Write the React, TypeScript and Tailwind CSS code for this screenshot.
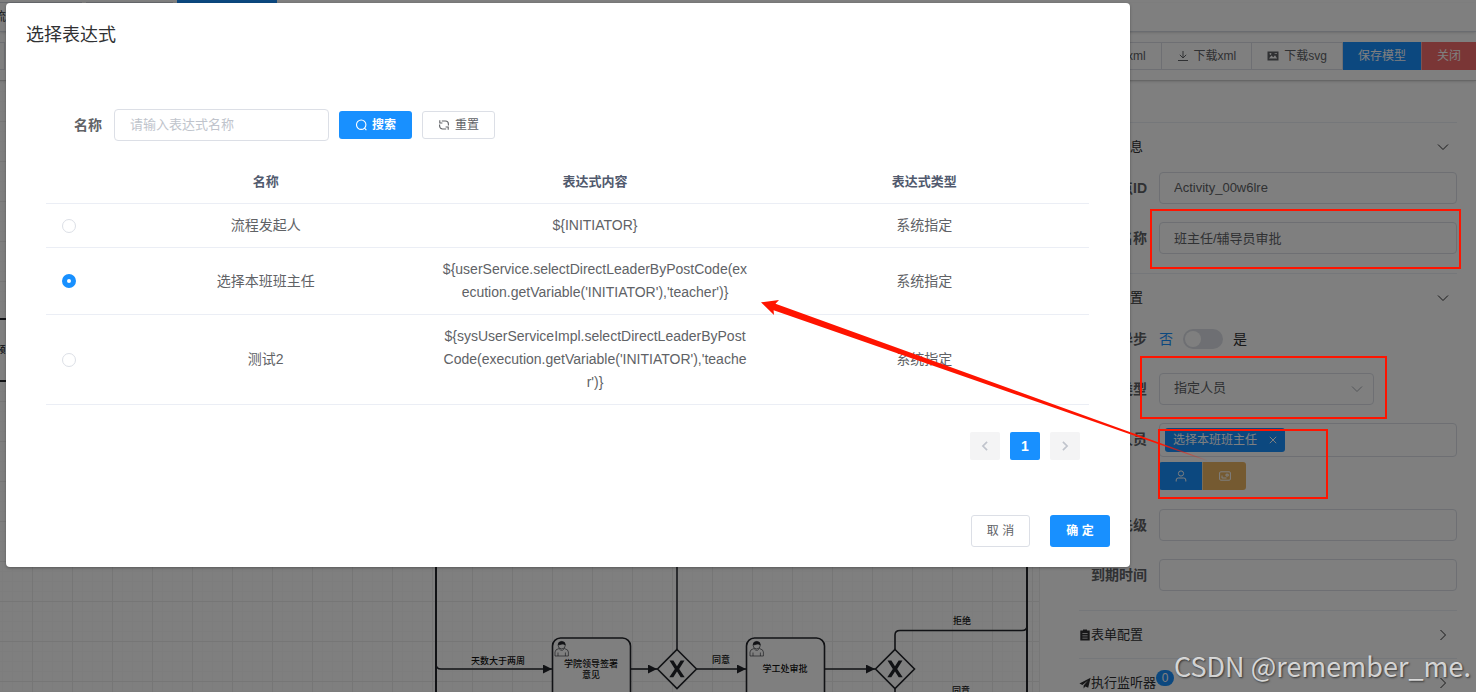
import React from "react";

const RED = "#ff1400";

function Chevron({ dir = "down", className = "" }: { dir?: "down" | "right" | "left"; className?: string }) {
  const d = { down: "M1 3.5 L6 8.5 L11 3.5", right: "M3.5 1 L8.5 6 L3.5 11", left: "M8.5 1 L3.5 6 L8.5 11" }[dir];
  return (
    <svg viewBox="0 0 12 12" className={className} fill="none" stroke="currentColor" aria-hidden="true">
      <path d={d} />
    </svg>
  );
}

const SearchIcon = () => (
  <svg viewBox="0 0 12 12" className="size-3" fill="none" stroke="currentColor" strokeWidth="1.1" aria-hidden="true">
    <circle cx="6.2" cy="5.7" r="4.7" />
    <path d="M9.5 9.2 L11.4 11.2" />
  </svg>
);

const RefreshIcon = () => (
  <svg viewBox="0 0 12 12" className="size-3" fill="none" stroke="currentColor" strokeWidth="1.1" aria-hidden="true">
    <path d="M3.8 2 H7.4 A3 3 0 0 1 10.4 5 V6.4 M1.6 5.6 V7 A3 3 0 0 0 4.6 10 H8.2" />
    <path d="M1.8 1.2 V4 H4.4 M10.2 10.8 V8 H7.6" />
  </svg>
);

const DownloadIcon = () => (
  <svg viewBox="0 0 12 12" className="size-3" fill="none" stroke="currentColor" aria-hidden="true">
    <path d="M6 1 V7.8 M2.8 4.8 L6 8 L9.2 4.8 M1 10.5 H11" />
  </svg>
);

const PictureIcon = () => (
  <svg viewBox="0 0 12 12" className="size-3" fill="currentColor" aria-hidden="true">
    <path
      fillRule="evenodd"
      d="M.5 1.5 H11.5 V10.5 H.5 Z M2 8.5 H10.2 L8 5.2 L6.3 7.2 L4.4 5.4 Z M3.4 3 A.9 .9 0 1 0 3.5 3 Z M7.6 3.2 H10 V4 H7.6 Z"
    />
  </svg>
);

const UserIcon = () => (
  <svg viewBox="0 0 12 12" className="size-3" fill="none" stroke="currentColor" aria-hidden="true">
    <circle cx="6" cy="3.5" r="2.6" />
    <path d="M1.2 11.5 V10 A2 2 0 0 1 3.2 8 H8.8 A2 2 0 0 1 10.8 10 V11.5" />
  </svg>
);

const PostcardIcon = () => (
  <svg viewBox="0 0 12 12" className="size-3" fill="none" stroke="currentColor" aria-hidden="true">
    <rect x="0.6" y="1.8" width="10.8" height="8.4" rx="1.2" />
    <path d="M2.8 8 H7.5 M3 5.5 V8 M7 4.2 H9.2 V6 H7 Z" />
  </svg>
);

const ClipboardIcon = () => (
  <svg viewBox="0 0 12 12" className="size-3" fill="currentColor" aria-hidden="true">
    <path
      fillRule="evenodd"
      d="M4 .5 H8 V1.5 H10.7 V11.5 H1.3 V1.5 H4 Z M3.4 4.2 V5 H8.6 V4.2 Z M3.4 6.5 V7.3 H8.6 V6.5 Z M3.4 8.8 V9.6 H8.6 V8.8 Z"
    />
  </svg>
);

const SendIcon = () => (
  <svg viewBox="0 0 12 12" className="size-3" fill="currentColor" aria-hidden="true">
    <path d="M11.6 .8 L.4 6.4 L3.4 7.9 L9 3.6 L4.6 8.6 V11.4 L6.3 9.4 L9.2 10.8 Z" />
  </svg>
);

function TaskUser({ x, y }: { x: number; y: number }) {
  return (
    <g transform={`translate(${x} ${y})`} fill="none" stroke="#22242a" strokeWidth="0.6">
      <path d="M1 15 V11 Q1 8.5 5 7.5 L6.8 9.2 H8.6 L10.4 7.5 Q14.4 8.5 14.4 11 V15 Z M4 15 V11.5 M11.4 15 V11.5" />
      <circle cx="7.7" cy="4.3" r="3.6" />
      <path d="M4.2 4 Q4 .4 7.7 .4 Q11.4 .4 11.2 4 Q9 2.6 7.7 3.2 Q6 3.8 4.2 4 Z" fill="#22242a" />
    </g>
  );
}

function Gateway({ x, y }: { x: number; y: number }) {
  return (
    <g transform={`translate(${x} ${y})`}>
      <path d="M0 -19.5 L19.5 0 L0 19.5 L-19.5 0 Z" fill="#fff" stroke="#22242a" strokeWidth="1.6" />
      <path
        d="M-7.5 -8.5 H-3.6 L0 -2.8 L3.6 -8.5 H7.5 L2.2 -.1 L7.7 8.3 H3.7 L0 2.5 L-3.7 8.3 H-7.7 L-2.2 -.1 Z"
        fill="#22242a"
      />
    </g>
  );
}

function Diagram() {
  return (
    <svg className="absolute left-0 top-0 h-full w-full" aria-label="流程图">
      <defs>
        <pattern id="minor" width="10" height="10" x="2" y="0" patternUnits="userSpaceOnUse">
          <path d="M0.5 0 V10 M0 0.5 H10" stroke="#fafafa" fill="none" />
        </pattern>
        <pattern id="major" width="40" height="40" x="32" y="0" patternUnits="userSpaceOnUse">
          <path d="M0.5 0 V40 M0 0.5 H40" stroke="#ececec" fill="none" />
        </pattern>
        <marker id="arrow" viewBox="0 0 9 9" refX="9" refY="4.5" markerWidth="9" markerHeight="9" markerUnits="userSpaceOnUse">
          <path d="M0 0 L9 4.5 L0 9 Z" fill="#22242a" />
        </marker>
      </defs>
      <rect width="100%" height="100%" fill="url(#minor)" />
      <rect width="100%" height="100%" fill="url(#major)" />
      <g transform="translate(0 -81)">
        <g fill="none" stroke="#22242a" strokeWidth="1.6">
          <path d="M436 500 V692 M1027 500 V692" strokeWidth="2" />
          <path d="M677 500 V650" strokeWidth="2" stroke="#55575c" />
          <path d="M436 660 V664 Q436 669 441 669 H552" markerEnd="url(#arrow)" />
          <path d="M631 669 H657" markerEnd="url(#arrow)" />
          <path d="M697 669 H746" markerEnd="url(#arrow)" />
          <path d="M825 669 H875" markerEnd="url(#arrow)" />
          <path d="M895 650 V635 Q895 630.500 900 630.500 H1022 Q1027 630.500 1027 626 M895 689 V700" />
          <rect x="552.500" y="638" width="78" height="78" rx="8" fill="#fff" />
          <rect x="746.500" y="638" width="78" height="78" rx="8" fill="#fff" />
          <rect x="-62" y="319" width="78" height="62" strokeWidth="2" fill="#fff" />
        </g>
        <TaskUser x={554} y={641} />
        <TaskUser x={749} y={641} />
        <Gateway x={677} y={669} />
        <Gateway x={895} y={669} />
        <g fill="#111" textAnchor="middle" className="text-[9px] font-medium">
          <text x="498" y="664">天数大于两周</text>
          <text x="591" y="667">学院领导签署</text>
          <text x="591" y="678">意见</text>
          <text x="785" y="672">学工处审批</text>
          <text x="721" y="663">同意</text>
          <text x="962" y="624">拒绝</text>
          <text x="961" y="694">同意</text>
          <text x="1" y="353">预</text>
        </g>
      </g>
    </svg>
  );
}

function TopBar() {
  return (
    <header>
      <div className="flex h-[3px] gap-1 text-transparent">
        <span className="h-full w-[82px] border-b border-gray-300" />
        <span className="h-full w-[87px] border-b border-gray-300" />
        <span className="h-full w-[100px] bg-[#1890ff]" />
      </div>
      <div className="flex h-[29px] items-center border-b border-[#d8dce5] text-[12px] text-[#333] shadow-sm">
        <span className="w-[6px] overflow-hidden whitespace-nowrap">
          <span className="float-right">流</span>
        </span>
      </div>
    </header>
  );
}

const toolButton = "flex h-7 items-center gap-[5px] whitespace-nowrap border-y border-r border-[#dcdfe6] px-[15px]";

function Toolbar() {
  return (
    <div className="flex h-[49px] items-center justify-between border-b border-[#ccc] text-[12px] text-[#606266] shadow-sm">
      <span className="h-7 w-[5px] border border-l-0 border-[#dcdfe6]" />
      <div className="flex">
        <button className={toolButton}>预览xml</button>
        <button className={toolButton}>
          <DownloadIcon />
          下载xml
        </button>
        <button className={toolButton}>
          <PictureIcon />
          下载svg
        </button>
        <button className="h-7 bg-[#1890ff] px-[15px] text-white">保存模型</button>
        <button className="h-7 border-l border-[#f9a7a7] bg-[#f56c6c] px-[15px] text-white">关闭</button>
      </div>
    </div>
  );
}

function Section({ title, icon, open, badge, children }: {
  title: string;
  icon?: React.ReactNode;
  open?: boolean;
  badge?: string;
  children?: React.ReactNode;
}) {
  return (
    <section className="border-t border-[#ebeef5]">
      <button className="flex h-[47px] w-full items-center pr-2 text-[13px] text-[#303133]">
        {icon}
        <span className="whitespace-nowrap">{title}</span>
        {badge && (
          <span className="mb-[10px] flex h-4 min-w-[18px] items-center justify-center rounded-full bg-[#1890ff] text-[12px] text-white">
            {badge}
          </span>
        )}
        <Chevron dir={open ? "down" : "right"} className="ml-auto size-3" />
      </button>
      {open && <div className="flex flex-col gap-[18px] pt-[2px] pb-[19px]">{children}</div>}
    </section>
  );
}

function Field({ id, label, children }: { id: string; label: string; children: React.ReactNode }) {
  return (
    <div className="flex">
      <label htmlFor={id} className="w-20 shrink-0 whitespace-nowrap pr-3 text-right text-[14px] leading-8 font-bold text-[#606266]">
        {label}
      </label>
      <div className="min-w-0 flex-1">{children}</div>
    </div>
  );
}

const inputBox = "h-8 w-full rounded border border-[#dcdfe6] bg-transparent px-[14px] pb-[2px] text-[13px] text-[#606266] outline-none";

function PropertiesPanel() {
  return (
    <aside className="w-[437px] shrink-0 border-l border-[#eee] pt-[41px] pr-[19px] pl-[39px]">
      <Section title="常规信息" icon={<SendIcon />} open>
        <Field id="node-id" label="节点ID">
          <input id="node-id" className={inputBox} defaultValue="Activity_00w6lre" />
        </Field>
        <Field id="node-name" label="节点名称">
          <input id="node-name" className={inputBox} defaultValue="班主任/辅导员审批" />
        </Field>
      </Section>
      <Section title="任务配置" icon={<SendIcon />} open>
        <Field id="async" label="是否异步">
          <div className="flex h-8 items-center gap-[10px] text-[14px]">
            <span className="text-[#1890ff]">否</span>
            <input
              id="async"
              type="checkbox"
              className="h-5 w-10 appearance-none rounded-full bg-[#dcdfe6] before:m-[2px] before:block before:size-4 before:rounded-full before:bg-white"
            />
            <span className="text-[#303133]">是</span>
          </div>
        </Field>
        <Field id="user-type" label="用户类型">
          <div className="relative w-[215px]">
            <select id="user-type" className={inputBox + " appearance-none"} defaultValue="指定人员">
              <option>指定人员</option>
            </select>
            <Chevron className="pointer-events-none absolute top-[10px] right-[11px] size-3 text-[#a8abb2]" />
          </div>
        </Field>
        <Field id="assignee" label="指定人员">
          <div className="flex h-[34px] items-center rounded border border-[#dcdfe6] px-[5px]">
            <span className="flex h-6 items-center gap-3 rounded-[3px] bg-[#1890ff] px-2 text-[12px] leading-6 whitespace-nowrap text-white">
              选择本班班主任
              <button aria-label="移除">
                <svg viewBox="0 0 8 8" className="size-2" stroke="currentColor">
                  <path d="M.8 .8 L7.2 7.2 M7.2 .8 L.8 7.2" />
                </svg>
              </button>
            </span>
            <input id="assignee" className="min-w-0 flex-1 bg-transparent outline-none" />
          </div>
          <div className="mt-[5px] mb-px flex text-white">
            <button aria-label="选择用户" className="flex h-7 w-[43px] items-center justify-center rounded-l-[3px] bg-[#1890ff]">
              <UserIcon />
            </button>
            <button aria-label="选择表达式" className="flex h-7 w-11 items-center justify-center rounded-r-[3px] border-l border-white/50 bg-[#ebb563]">
              <PostcardIcon />
            </button>
          </div>
        </Field>
        <Field id="priority" label="优先级">
          <input id="priority" className={inputBox} />
        </Field>
        <Field id="due" label="到期时间">
          <input id="due" className={inputBox} />
        </Field>
      </Section>
      <Section title="表单配置" icon={<ClipboardIcon />} />
      <Section title="执行监听器" icon={<SendIcon />} badge="0" />
    </aside>
  );
}

const rows = [
  { name: "流程发起人", content: "${INITIATOR}", type: "系统指定" },
  { name: "选择本班班主任", content: "${userService.selectDirectLeaderByPostCode(execution.getVariable('INITIATOR'),'teacher')}", type: "系统指定" },
  { name: "测试2", content: "${sysUserServiceImpl.selectDirectLeaderByPostCode(execution.getVariable('INITIATOR'),'teacher')}", type: "系统指定" },
];

function ExpressionDialog() {
  const [selected, setSelected] = React.useState(1);
  return (
    <div role="dialog" aria-label="选择表达式" className="rounded-sm bg-white text-[#606266] shadow-[0_1px_3px_rgba(0,0,0,0.3)]">
      <h2 className="px-5 pt-5 text-[18px] leading-6 text-[#303133]">选择表达式</h2>
      <div className="pt-[62px] pr-[41px] pl-10">
        <form className="flex items-center gap-[10px]" onSubmit={(e) => e.preventDefault()}>
          <label htmlFor="expr-name" className="w-[58px] pr-[2px] text-right text-[14px] font-bold">
            名称
          </label>
          <input
            id="expr-name"
            placeholder="请输入表达式名称"
            className="h-8 w-[215px] rounded border border-[#dcdfe6] px-[15px] pb-[2px] text-[13px] outline-none placeholder:text-[#c0c4cc]"
          />
          <button className="flex h-7 w-[73px] items-center justify-center gap-[5px] rounded-[3px] bg-[#1890ff] text-[12px] font-bold text-white">
            <SearchIcon />
            搜索
          </button>
          <button type="reset" className="flex h-7 w-[73px] items-center justify-center gap-[5px] rounded-[3px] border border-[#dcdfe6] text-[12px]">
            <RefreshIcon />
            重置
          </button>
        </form>
        <table className="mt-[19px] w-full table-fixed border-collapse text-center text-[14px] leading-[23px]">
          <colgroup>
            <col className="w-[55px]" />
            <col />
            <col />
            <col />
          </colgroup>
          <thead>
            <tr className="border-b border-[#ebeef5] text-[13px] text-[#515a6e]">
              <th />
              <th className="p-[10px] font-bold">名称</th>
              <th className="p-[10px] font-bold">表达式内容</th>
              <th className="p-[10px] font-bold">表达式类型</th>
            </tr>
          </thead>
          <tbody>
            {rows.map((r, i) => (
              <tr key={r.name} className="border-b border-[#ebeef5]">
                <td className="px-4">
                  <input
                    type="radio"
                    name="expression"
                    aria-label={r.name}
                    checked={selected === i}
                    onChange={() => setSelected(i)}
                    className="block size-[14px] appearance-none rounded-full border border-[#dcdfe6] bg-white checked:border-[5px] checked:border-[#1890ff]"
                  />
                </td>
                <td className="p-[10px]">{r.name}</td>
                <td className="p-[10px] break-all">{r.content}</td>
                <td className="p-[10px]">{r.type}</td>
              </tr>
            ))}
          </tbody>
        </table>
        <nav aria-label="分页" className="mt-[27px] flex justify-end gap-[10px] pr-[9px] text-[13px] font-bold">
          <button aria-label="上一页" disabled className="flex h-7 w-[30px] items-center justify-center rounded-[2px] bg-[#f4f4f5] text-[#c0c4cc]">
            <Chevron dir="left" className="size-[10px] stroke-2" />
          </button>
          <button className="h-7 w-[30px] rounded-[2px] bg-[#1890ff] text-[14px] text-white">1</button>
          <button aria-label="下一页" disabled className="flex h-7 w-[30px] items-center justify-center rounded-[2px] bg-[#f4f4f5] text-[#c0c4cc]">
            <Chevron dir="right" className="size-[10px] stroke-2" />
          </button>
        </nav>
      </div>
      <div className="mt-[55px] flex justify-end gap-5 px-5 pb-5 text-[12px]">
        <button className="h-8 w-[59px] rounded-[3px] border border-[#dcdfe6]">取 消</button>
        <button className="h-8 w-[60px] rounded-[3px] bg-[#1890ff] font-bold text-white">确 定</button>
      </div>
    </div>
  );
}

function Annotations() {
  return (
    <div className="pointer-events-none absolute inset-0">
      <div className="absolute top-[209px] left-[1150px] h-[60px] w-[311px] border-2 border-[#ff1400]" />
      <div className="absolute top-[356px] left-[1140px] h-[63px] w-[247px] border-2 border-[#ff1400]" />
      <div className="absolute top-[429px] left-[1158px] h-[70px] w-[170px] border-2 border-[#ff1400]" />
      <svg className="absolute inset-0 h-full w-full" aria-hidden="true">
        <defs>
          <linearGradient id="fade" gradientUnits="userSpaceOnUse" x1="1160" y1="441" x2="1210" y2="461">
            <stop offset="0" stopColor={RED} />
            <stop offset="1" stopColor={RED} stopOpacity="0" />
          </linearGradient>
        </defs>
        <path d="M761 302.300 L779 300 L775.500 303.800 L1207 460 L1207 461 L773.600 310.200 L774 315 Z" fill="url(#fade)" />
      </svg>
      <div className="absolute right-[5px] bottom-[6px] font-['Noto_Sans_CJK_SC'] text-[27px] leading-[40px] whitespace-nowrap text-white/75 [text-shadow:1px_1px_2px_rgba(0,0,0,0.6)]">
        CSDN @remember_me.
      </div>
    </div>
  );
}

export default function App() {
  return (
    <div className="relative h-screen overflow-hidden bg-white font-['Liberation_Sans','Noto_Sans_CJK_SC',sans-serif]">
      <div className="flex h-full flex-col">
        <TopBar />
        <Toolbar />
        <main className="flex min-h-0 flex-1">
          <div className="relative min-w-0 flex-1 overflow-hidden">
            <Diagram />
          </div>
          <PropertiesPanel />
        </main>
      </div>
      <div className="absolute inset-0 bg-black/50 pt-[3px] pr-[346px] pl-[6px]">
        <ExpressionDialog />
      </div>
      <Annotations />
    </div>
  );
}
